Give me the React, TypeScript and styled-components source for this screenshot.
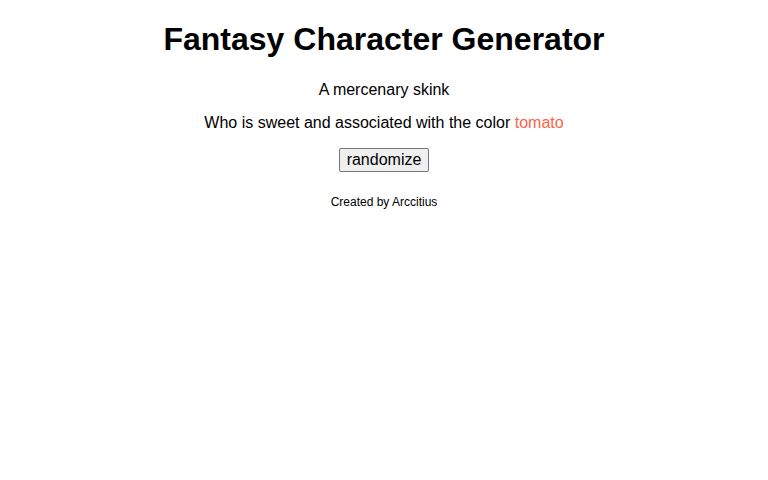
import * as React from 'react';
import { useState } from 'react';
import styled, { createGlobalStyle } from 'styled-components';

const races = ['skink', 'elf', 'dwarf', 'orc', 'gnome', 'halfling'];
const jobs = ['mercenary', 'bard', 'wizard', 'thief', 'cleric', 'ranger'];
const traits = ['sweet', 'grumpy', 'brave', 'sly', 'curious', 'lazy'];
const colors = ['tomato', 'teal', 'orchid', 'goldenrod', 'slateblue', 'seagreen'];

const pick = (list: string[]) => list[Math.floor(Math.random() * list.length)];

const GlobalStyle = createGlobalStyle`
  body {
    margin: 0;
    font-family: "Liberation Sans", Arial, sans-serif;
    color: #000;
    background: #fff;
  }
`;

const Page = styled.div`
  display: flex;
  flex-direction: column;
  align-items: center;
  text-align: center;
  padding: 0 8px;
`;

const Title = styled.h1`
  font-size: 32px;
  font-weight: bold;
  margin: 21px 0 23px;
`;

const Line = styled.p`
  font-size: 16px;
  margin: 0 0 15px;
`;

const ColorName = styled.span<{ $color: string }>`
  color: ${props => props.$color};
`;

const RandomButton = styled.button`
  font-family: "Liberation Sans", Arial, sans-serif;
  font-size: 16px;
  color: #000;
  background: #efefef;
  border: 1px solid #767676;
  border-radius: 2px;
  padding: 2px 7px;
  margin-top: 1px;
  cursor: pointer;
`;

const Credit = styled.p`
  font-size: 12px;
  margin: 23px 0 0;
`;

const App = () => {
  const [character, setCharacter] = useState({
    job: 'mercenary',
    race: 'skink',
    trait: 'sweet',
    color: 'tomato',
  });

  const randomize = () => {
    setCharacter({
      job: pick(jobs),
      race: pick(races),
      trait: pick(traits),
      color: pick(colors),
    });
  };

  return <Page>
    <GlobalStyle />
    <Title>Fantasy Character Generator</Title>
    <Line>A {character.job} {character.race}</Line>
    <Line>
      Who is {character.trait} and associated with the color{' '}
      <ColorName $color={character.color}>{character.color}</ColorName>
    </Line>
    <RandomButton onClick={randomize}>randomize</RandomButton>
    <Credit>Created by Arccitius</Credit>
  </Page>
};

export default App;
